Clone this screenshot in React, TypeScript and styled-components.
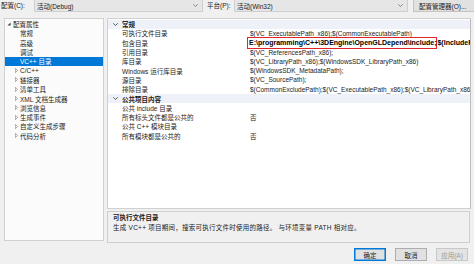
import styled, { createGlobalStyle } from "styled-components";

const GlobalStyle = createGlobalStyle`
  html, body {
    margin: 0;
    padding: 0;
    background: #f0f0f0;
  }
  body {
    font-family: "Liberation Sans", "Noto Sans CJK SC", sans-serif;
    font-size: 6.5px;
    color: #1b1b1b;
  }
`;

const ROW_H = 9.3;

const treeItems = [
  { text: "常规", arrow: false },
  { text: "高级", arrow: false },
  { text: "调试", arrow: false },
  { text: "VC++ 目录", arrow: false, selected: true },
  { text: "C/C++", arrow: true },
  { text: "链接器", arrow: true },
  { text: "清单工具", arrow: true },
  { text: "XML 文档生成器", arrow: true },
  { text: "浏览信息", arrow: true },
  { text: "生成事件", arrow: true },
  { text: "自定义生成步骤", arrow: true },
  { text: "代码分析", arrow: true },
];

type GridItem =
  | { kind: "header"; label: string }
  | { kind: "prop"; label: string; value: string; marked?: boolean; rest?: string };

const gridItems: GridItem[] = [
  { kind: "header", label: "常规" },
  { kind: "prop", label: "可执行文件目录", value: "$(VC_ExecutablePath_x86);$(CommonExecutablePath)" },
  {
    kind: "prop",
    label: "包含目录",
    value: "E:\\programming\\C++\\3DEngine\\OpenGLDepend\\include;",
    marked: true,
    rest: "$(IncludePath)",
  },
  { kind: "prop", label: "引用目录", value: "$(VC_ReferencesPath_x86);" },
  { kind: "prop", label: "库目录", value: "$(VC_LibraryPath_x86);$(WindowsSDK_LibraryPath_x86)" },
  { kind: "prop", label: "Windows 运行库目录", value: "$(WindowsSDK_MetadataPath);" },
  { kind: "prop", label: "源目录", value: "$(VC_SourcePath);" },
  {
    kind: "prop",
    label: "排除目录",
    value: "$(CommonExcludePath);$(VC_ExecutablePath_x86);$(VC_LibraryPath_x86)",
  },
  { kind: "header", label: "公共项目内容" },
  { kind: "prop", label: "公共 include 目录", value: "" },
  { kind: "prop", label: "所有标头文件都是公共的", value: "否" },
  { kind: "prop", label: "公共 C++ 模块目录", value: "" },
  { kind: "prop", label: "所有模块都是公共的", value: "否" },
];

const Root = styled.div`
  width: 474px;
  height: 264px;
  overflow: hidden;
  display: flex;
  flex-direction: column;
`;

const TopBar = styled.div`
  display: flex;
  align-items: center;
  height: 12px;
  padding-left: 1px;
`;

const FieldLabel = styled.span<{ $width: number; $gap?: number }>`
  box-sizing: border-box;
  width: ${({ $width }) => $width}px;
  padding-left: ${({ $gap = 0 }) => $gap}px;
  flex: none;
  line-height: 12px;
  white-space: nowrap;
`;

const Combo = styled.div<{ $width: number }>`
  box-sizing: border-box;
  width: ${({ $width }) => $width}px;
  height: 12px;
  flex: none;
  display: flex;
  align-items: center;
  justify-content: space-between;
  padding: 0 4px 0 2px;
  background: #e6e6e6;
  border: 1px solid #cfcfcf;
  border-top: none;
  white-space: nowrap;
`;

const TopButton = styled.div`
  box-sizing: border-box;
  margin-left: 5px;
  height: 12px;
  width: 64px;
  flex: none;
  display: flex;
  align-items: center;
  padding-left: 5px;
  background: #e1e1e1;
  border: 1px solid #c4c4c4;
  border-top: none;
  white-space: nowrap;
`;

const Body = styled.div`
  display: flex;
  gap: 3px;
  margin-top: 6px;
  padding-left: 4px;
`;

const Tree = styled.div`
  box-sizing: border-box;
  width: 100px;
  height: 223px;
  flex: none;
  background: #fbfbfb;
  border: 1px solid #d0d0d0;
  padding-top: 0.5px;
`;

const TreeRow = styled.div<{ $indent: number; $selected?: boolean }>`
  display: flex;
  align-items: center;
  height: ${ROW_H}px;
  padding-left: ${({ $indent }) => $indent}px;
  background: ${({ $selected }) => ($selected ? "#0078d7" : "transparent")};
  color: ${({ $selected }) => ($selected ? "#ffffff" : "#1b1b1b")};
  white-space: nowrap;
`;

const TreeArrow = styled.span`
  width: 5px;
  display: inline-flex;
  align-items: center;
  flex: none;
`;

const RightCol = styled.div`
  width: 364px;
  flex: none;
  display: flex;
  flex-direction: column;
  gap: 2px;
`;

const Grid = styled.div`
  box-sizing: border-box;
  height: 191px;
  background: #ffffff;
  border: 1px solid #d0d0d0;
  border-right-color: #bdbdbd;
  overflow: hidden;
  padding-top: 0.5px;
`;

const GridRow = styled.div<{ $header?: boolean }>`
  display: flex;
  align-items: center;
  height: ${ROW_H}px;
  width: 440px;
  background: ${({ $header }) => ($header ? "#eef2f8" : "transparent")};
  white-space: nowrap;
`;

const HeaderLabel = styled.span`
  display: flex;
  align-items: center;
  gap: 4px;
  padding-left: 5px;
  font-weight: bold;
`;

const PropLabel = styled.span`
  width: 124px;
  padding-left: 14px;
  flex: none;
`;

const PropValue = styled.span`
  padding-left: 4px;
  display: flex;
  align-items: center;
`;

const Marked = styled.span`
  font-weight: bold;
  font-size: 7px;
  border: 1px solid #e0242a;
  padding: 1.5px 0 1.5px 1px;
  margin-left: -3px;
  color: #000;
`;

const Rest = styled.span`
  font-weight: bold;
  font-size: 7px;
  color: #000;
`;

const Desc = styled.div`
  box-sizing: border-box;
  height: 32px;
  width: 363px;
  border: 1px solid #cfcfcf;
  background: #f0f0f0;
  padding: 1px 0 0 5px;
  line-height: 10px;
`;

const DescTitle = styled.div`
  font-weight: bold;
`;

const DescText = styled.div`
  letter-spacing: 0.25px;
`;

const Footer = styled.div`
  display: flex;
  justify-content: flex-end;
  gap: 9px;
  margin-top: 5px;
  padding-right: 6px;
`;

const DialogButton = styled.div<{ $primary?: boolean; $disabled?: boolean }>`
  box-sizing: border-box;
  width: 32px;
  height: 13px;
  flex: none;
  display: flex;
  align-items: center;
  justify-content: center;
  background: ${({ $disabled }) => ($disabled ? "#e4e4e4" : "#e1e1e1")};
  border: 1px solid
    ${({ $primary, $disabled }) => ($primary ? "#0078d7" : $disabled ? "#c8c8c8" : "#adadad")};
  box-shadow: ${({ $primary }) => ($primary ? "inset 0 0 0 0.5px #0078d7" : "none")};
  color: ${({ $disabled }) => ($disabled ? "#9a9a9a" : "#1b1b1b")};
`;

function ChevronDown({ color = "#6d6d6d" }: { color?: string }) {
  return (
    <svg width="5" height="3" viewBox="0 0 5 3">
      <path d="M0.3 0.3 L2.5 2.5 L4.7 0.3" fill="none" stroke={color} strokeWidth="0.8" />
    </svg>
  );
}

function TriangleOpen() {
  return (
    <svg width="4" height="4" viewBox="0 0 4 4">
      <path d="M3.6 0.4 L3.6 3.6 L0.4 3.6 Z" fill="#444" />
    </svg>
  );
}

function TriangleClosed() {
  return (
    <svg width="3" height="5" viewBox="0 0 3 5">
      <path d="M0.4 0.4 L2.6 2.5 L0.4 4.6 Z" fill="none" stroke="#777" strokeWidth="0.6" />
    </svg>
  );
}

export default function App() {
  return (
    <Root>
      <GlobalStyle />
      <TopBar>
        <FieldLabel $width={33}>配置(C):</FieldLabel>
        <Combo $width={169}>
          <span>活动(Debug)</span>
          <ChevronDown />
        </Combo>
        <FieldLabel $width={31} $gap={4}>
          平台(P):
        </FieldLabel>
        <Combo $width={174}>
          <span>活动(Win32)</span>
          <ChevronDown />
        </Combo>
        <TopButton>配置管理器(O)...</TopButton>
      </TopBar>

      <Body>
        <Tree>
          <TreeRow $indent={2}>
            <TreeArrow>
              <TriangleOpen />
            </TreeArrow>
            <span style={{ marginLeft: 1 }}>配置属性</span>
          </TreeRow>
          {treeItems.map((item) => (
            <TreeRow key={item.text} $indent={item.arrow ? 10 : 15} $selected={item.selected}>
              {item.arrow && (
                <TreeArrow>
                  <TriangleClosed />
                </TreeArrow>
              )}
              <span>{item.text}</span>
            </TreeRow>
          ))}
        </Tree>

        <RightCol>
          <Grid>
            {gridItems.map((item) =>
              item.kind === "header" ? (
                <GridRow key={item.label} $header>
                  <HeaderLabel>
                    <ChevronDown color="#333" />
                    {item.label}
                  </HeaderLabel>
                </GridRow>
              ) : (
                <GridRow key={item.label}>
                  <PropLabel>{item.label}</PropLabel>
                  <PropValue>
                    {item.marked ? (
                      <>
                        <Marked>{item.value}</Marked>
                        <Rest>{item.rest}</Rest>
                      </>
                    ) : (
                      item.value
                    )}
                  </PropValue>
                </GridRow>
              )
            )}
          </Grid>
          <Desc>
            <DescTitle>可执行文件目录</DescTitle>
            <DescText>生成 VC++ 项目期间，搜索可执行文件时使用的路径。 与环境变量 PATH 相对应。</DescText>
          </Desc>
        </RightCol>
      </Body>

      <Footer>
        <DialogButton $primary>确定</DialogButton>
        <DialogButton>取消</DialogButton>
        <DialogButton $disabled>应用(A)</DialogButton>
      </Footer>
    </Root>
  );
}
